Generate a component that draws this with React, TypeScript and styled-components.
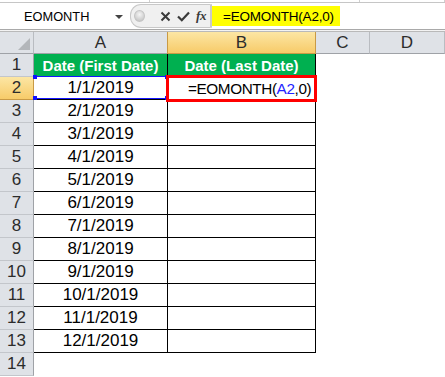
import React from "react";
import styled, { createGlobalStyle, css } from "styled-components";

const GlobalStyle = createGlobalStyle`
  html, body {
    margin: 0;
    padding: 0;
    background: #ffffff;
  }
  * {
    box-sizing: border-box;
  }
`;

const Window = styled.div`
  width: 445px;
  height: 377px;
  overflow: hidden;
  background: #ffffff;
  font-family: "Liberation Sans", Arial, sans-serif;
  display: flex;
  flex-direction: column;
`;

const TopStrip = styled.div`
  height: 3px;
  border-bottom: 1px solid #c6c6c6;
  display: grid;
  grid-template-columns: 150px 210px 1fr;
  & > span {
    border-right: 1px solid #d0d0d0;
  }
`;

const FormulaBar = styled.div`
  height: 26px;
  display: flex;
  align-items: stretch;
  background: #ffffff;
`;

const NameBox = styled.div`
  width: 130px;
  display: flex;
  align-items: center;
  padding-left: 24px;
  font-size: 12.8px;
  color: #000;
  position: relative;
`;

const DropArrow = styled.span`
  position: absolute;
  right: 7px;
  top: 12px;
  width: 0;
  height: 0;
  border-left: 4px solid transparent;
  border-right: 4px solid transparent;
  border-top: 4px solid #444;
`;

const ButtonGroup = styled.div`
  width: 82px;
  display: flex;
  align-items: center;
  background: #f0f0f0;
  border: 1px solid #c8c8c8;
  border-right: 2px solid #c9c9c9;
  border-radius: 11px 0 0 11px;
  margin: 1px 0 1px 0;
  padding-left: 3px;
`;

const Knob = styled.span`
  width: 12px;
  height: 12px;
  border-radius: 50%;
  background: radial-gradient(circle at 50% 35%, #f4f4f4 0%, #d2d2d2 60%, #bdbdbd 100%);
  border: 1px solid #c4c4c4;
  margin-right: 11px;
`;

const IconSlot = styled.span`
  width: 20px;
  display: flex;
  align-items: center;
  justify-content: center;
  color: #3c3c3c;
`;

const Fx = styled.span`
  font-family: "Liberation Serif", "Times New Roman", serif;
  font-style: italic;
  font-weight: bold;
  font-size: 13px;
  color: #3a3a3a;
  letter-spacing: -0.5px;
`;

const FormulaInput = styled.div`
  flex: 1;
  display: flex;
  align-items: center;
`;

const FormulaText = styled.span`
  background: #ffff00;
  height: 20px;
  width: 128px;
  display: flex;
  align-items: center;
  padding-left: 11px;
  font-size: 13.5px;
  letter-spacing: -0.2px;
  color: #000;
`;

const Separator = styled.div`
  height: 3px;
  border-top: 1px solid #a9a9a9;
  border-bottom: 1px solid #b9b9b9;
  background: #f3f3f3;
`;

const Sheet = styled.div`
  display: grid;
  grid-template-columns: 34px 134px 148px 54px 75px;
  grid-template-rows: 22px repeat(14, 23px);
`;

const headerBase = css`
  display: flex;
  align-items: center;
  justify-content: center;
  background: #dfe2e7;
  color: #2c2c2c;
  font-size: 17px;
  border-right: 1px solid #b9bcc1;
  border-bottom: 1px solid #9fa2a7;
`;

const activeHeader = css`
  background: linear-gradient(#fce6a4, #f7cb69);
  border-color: #c99a45;
`;

const Corner = styled.div`
  ${headerBase};
  position: relative;
  &::after {
    content: "";
    position: absolute;
    right: 3px;
    bottom: 3px;
    width: 0;
    height: 0;
    border-left: 12px solid transparent;
    border-bottom: 12px solid #b3b6ba;
  }
`;

const ColHeader = styled.div<{ $active?: boolean }>`
  ${headerBase};
  ${(p) => p.$active && activeHeader};
  ${(p) => p.$active && "border-left: 1px solid #c99a45; margin-left: -1px;"}
`;

const RowHeader = styled.div<{ $active?: boolean }>`
  ${headerBase};
  border-bottom: 1px solid #c3c6cb;
  border-right: 1px solid #9fa2a7;
  ${(p) => p.$active && activeHeader};
`;

const Cell = styled.div<{ $boxed?: boolean; $green?: boolean }>`
  position: relative;
  display: flex;
  align-items: center;
  justify-content: center;
  font-size: 17px;
  color: #000;
  ${(p) =>
    p.$boxed &&
    css`
      border-right: 1px solid #000;
      border-bottom: 1px solid #000;
    `}
  ${(p) =>
    p.$green &&
    css`
      background: #00b050;
      color: #ffffff;
      font-weight: bold;
      font-size: 15px;
    `}
`;

const CopySelection = styled.span`
  position: absolute;
  left: 0;
  top: -1px;
  right: 0;
  bottom: 0;
  border-top: 1px solid #1515ff;
  border-bottom: 1px solid #1515ff;
  pointer-events: none;
`;

const Handle = styled.span<{ $x: "left" | "right"; $y: "top" | "bottom" }>`
  position: absolute;
  width: 4px;
  height: 4px;
  background: #1010ff;
  ${(p) => (p.$x === "left" ? "left: -1px;" : "right: -2px;")}
  ${(p) => (p.$y === "top" ? "top: -2px;" : "bottom: -2px;")}
`;

const EditBox = styled.div`
  position: absolute;
  left: -2px;
  top: -2px;
  right: -2px;
  bottom: -3px;
  border: 3px solid #ff0000;
  display: flex;
  align-items: center;
  padding-left: 19px;
  font-size: 15.3px;
  letter-spacing: -0.4px;
  color: #000;
  z-index: 2;
`;

const Ref = styled.span`
  color: #2323ff;
`;

const dates = [
  "1/1/2019",
  "2/1/2019",
  "3/1/2019",
  "4/1/2019",
  "5/1/2019",
  "6/1/2019",
  "7/1/2019",
  "8/1/2019",
  "9/1/2019",
  "10/1/2019",
  "11/1/2019",
  "12/1/2019",
];

const CrossIcon = () => (
  <svg width="11" height="11" viewBox="0 0 11 11">
    <path d="M1.5 1.5 L9.5 9.5 M9.5 1.5 L1.5 9.5" stroke="#3a3a3a" strokeWidth="2" />
  </svg>
);

const CheckIcon = () => (
  <svg width="13" height="11" viewBox="0 0 13 11">
    <path d="M1 5.5 L4.8 9.2 L12 1.5" stroke="#3a3a3a" strokeWidth="2.2" fill="none" />
  </svg>
);

const App = () => {
  return (
    <Window>
      <GlobalStyle />
      <TopStrip>
        <span />
        <span />
        <span />
      </TopStrip>
      <FormulaBar>
        <NameBox>
          EOMONTH
          <DropArrow />
        </NameBox>
        <ButtonGroup>
          <Knob />
          <IconSlot>
            <CrossIcon />
          </IconSlot>
          <IconSlot>
            <CheckIcon />
          </IconSlot>
          <IconSlot>
            <Fx>fx</Fx>
          </IconSlot>
        </ButtonGroup>
        <FormulaInput>
          <FormulaText>=EOMONTH(A2,0)</FormulaText>
        </FormulaInput>
      </FormulaBar>
      <Separator />
      <Sheet>
        <Corner />
        <ColHeader>A</ColHeader>
        <ColHeader $active>B</ColHeader>
        <ColHeader>C</ColHeader>
        <ColHeader>D</ColHeader>

        <RowHeader>1</RowHeader>
        <Cell $boxed $green>Date (First Date)</Cell>
        <Cell $boxed $green>Date (Last Date)</Cell>
        <Cell />
        <Cell />

        {dates.map((d, i) => {
          const row = i + 2;
          const active = row === 2;
          return (
            <React.Fragment key={d}>
              <RowHeader $active={active}>{row}</RowHeader>
              <Cell $boxed>
                {d}
                {active && (
                  <CopySelection>
                    <Handle $x="left" $y="top" />
                    <Handle $x="right" $y="top" />
                    <Handle $x="left" $y="bottom" />
                    <Handle $x="right" $y="bottom" />
                  </CopySelection>
                )}
              </Cell>
              <Cell $boxed>
                {active && (
                  <EditBox>
                    =EOMONTH(<Ref>A2</Ref>,0)
                  </EditBox>
                )}
              </Cell>
              <Cell />
              <Cell />
            </React.Fragment>
          );
        })}

        <RowHeader>14</RowHeader>
        <Cell />
        <Cell />
        <Cell />
        <Cell />
      </Sheet>
    </Window>
  );
};

export default App;
